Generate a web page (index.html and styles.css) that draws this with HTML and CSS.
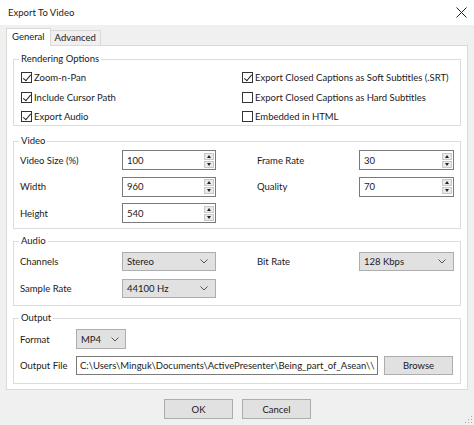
FILE: index.html
```html
<!DOCTYPE html>
<html>
<head>
<meta charset="utf-8">
<link rel="stylesheet" href="styles.css">
</head>
<body>
<div class="window">
  <div class="titlebar">
    <span class="title">Export To Video</span>
    <svg class="close" width="11" height="11" viewBox="0 0 11 11"><path d="M0.5 0.5 L10.5 10.5 M10.5 0.5 L0.5 10.5" stroke="#222" stroke-width="1" fill="none"/></svg>
  </div>
  <div class="client">
    <div class="tabs">
      <div class="tab active">General</div>
      <div class="tab">Advanced</div>
    </div>
    <div class="pane">
      <fieldset class="group render">
        <legend>Rendering Options</legend>
        <div class="checks">
          <label class="chk"><span class="box on"></span>Zoom-n-Pan</label>
          <label class="chk"><span class="box on"></span>Export Closed Captions as Soft Subtitles (.SRT)</label>
          <label class="chk"><span class="box on"></span>Include Cursor Path</label>
          <label class="chk"><span class="box"></span>Export Closed Captions as Hard Subtitles</label>
          <label class="chk"><span class="box on"></span>Export Audio</label>
          <label class="chk"><span class="box"></span>Embedded in HTML</label>
        </div>
      </fieldset>

      <fieldset class="group video">
        <legend>Video</legend>
        <div class="grid vgrid">
          <span class="lbl">Video Size (%)</span>
          <div class="spin"><span class="val">100</span><span class="btns"><i class="up"></i><i class="dn"></i></span></div>
          <span></span>
          <span class="lbl">Frame Rate</span>
          <div class="spin"><span class="val">30</span><span class="btns"><i class="up"></i><i class="dn"></i></span></div>

          <span class="lbl">Width</span>
          <div class="spin"><span class="val">960</span><span class="btns"><i class="up"></i><i class="dn"></i></span></div>
          <span></span>
          <span class="lbl">Quality</span>
          <div class="spin"><span class="val">70</span><span class="btns"><i class="up"></i><i class="dn"></i></span></div>

          <span class="lbl">Height</span>
          <div class="spin"><span class="val">540</span><span class="btns"><i class="up"></i><i class="dn"></i></span></div>
        </div>
      </fieldset>

      <fieldset class="group audio">
        <legend>Audio</legend>
        <div class="grid agrid">
          <span class="lbl">Channels</span>
          <div class="combo"><span class="val">Stereo</span><svg class="chev" width="8" height="5" viewBox="0 0 8 5"><path d="M0.5 0.5 L4 4 L7.5 0.5" stroke="#555" fill="none"/></svg></div>
          <span></span>
          <span class="lbl">Bit Rate</span>
          <div class="combo"><span class="val">128 Kbps</span><svg class="chev" width="8" height="5" viewBox="0 0 8 5"><path d="M0.5 0.5 L4 4 L7.5 0.5" stroke="#555" fill="none"/></svg></div>

          <span class="lbl">Sample Rate</span>
          <div class="combo"><span class="val">44100 Hz</span><svg class="chev" width="8" height="5" viewBox="0 0 8 5"><path d="M0.5 0.5 L4 4 L7.5 0.5" stroke="#555" fill="none"/></svg></div>
        </div>
      </fieldset>

      <fieldset class="group output">
        <legend>Output</legend>
        <div class="orow">
          <span class="lbl olbl">Format</span>
          <div class="combo fmt"><span class="val">MP4</span><svg class="chev" width="8" height="5" viewBox="0 0 8 5"><path d="M0.5 0.5 L4 4 L7.5 0.5" stroke="#555" fill="none"/></svg></div>
        </div>
        <div class="orow row2">
          <span class="lbl olbl">Output File</span>
          <div class="path"><span class="pathtext">C:\Users\Minguk\Documents\ActivePresenter\Being_part_of_Asean\\</span></div>
          <div class="btn browse">Browse</div>
        </div>
      </fieldset>
    </div>
    <div class="footer">
      <div class="btn dlg">OK</div>
      <div class="btn dlg">Cancel</div>
    </div>
  </div>
  <svg class="grip" width="10" height="10" viewBox="0 0 10 10">
    <rect x="8" y="2" width="1" height="1" fill="#aaa"/>
    <rect x="5" y="5" width="1" height="1" fill="#aaa"/>
    <rect x="8" y="5" width="1" height="1" fill="#aaa"/>
    <rect x="2" y="8" width="1" height="1" fill="#aaa"/>
    <rect x="5" y="8" width="1" height="1" fill="#aaa"/>
    <rect x="8" y="8" width="1" height="1" fill="#aaa"/>
  </svg>
</div>
</body>
</html>
```
FILE: styles.css
```css
html, body {
  margin: 0;
  padding: 0;
}
body {
  width: 474px;
  height: 425px;
  overflow: hidden;
  background: #f0f0f0;
  font-family: Lato, "Noto Sans", sans-serif;
  font-size: 9.5px;
  color: #1a1a1a;
}
.window {
  position: relative;
  width: 474px;
  height: 425px;
}
.titlebar {
  height: 25px;
  background: #ffffff;
  display: flex;
  align-items: center;
  justify-content: space-between;
  padding: 0 8px 1px 8px;
  box-sizing: border-box;
}
.title {
  color: #222;
}
.close {
  margin-right: -1px;
}
.client {
  padding: 3px 6px 0 6px;
}
.tabs {
  display: flex;
  align-items: flex-end;
  height: 17px;
  position: relative;
  z-index: 1;
}
.tab {
  height: 14px;
  line-height: 14px;
  padding: 0 4px;
  border: 1px solid #d9d9d9;
  border-bottom: none;
  background: #f0f0f0;
  box-sizing: content-box;
}
.tab.active {
  height: 17px;
  line-height: 15px;
  background: #ffffff;
  padding: 0 5px;
  margin-bottom: -1px;
}
.tab + .tab {
  border-left: none;
}
.pane {
  background: #ffffff;
  border: 1px solid #d9d9d9;
  height: 336px;
  padding: 7px 6px 0 6px;
  box-sizing: content-box;
}
.group {
  margin: 0 0 6px 0;
  border: 1px solid #dcdcdc;
  padding: 0 6px;
  min-width: 0;
}
.group legend {
  padding: 0 2px;
  margin-left: -1px;
  line-height: 12px;
  height: 12px;
}
.render {
  padding-top: 3px;
  padding-bottom: 2px;
  height: 66px;
  box-sizing: content-box;
  margin-bottom: 9px;
}
.checks {
  display: grid;
  grid-template-columns: 221px 1fr;
  grid-auto-rows: 19.5px;
}
.chk {
  display: flex;
  align-items: center;
  white-space: nowrap;
}
.box {
  width: 11px;
  height: 11px;
  border: 1px solid #333;
  box-sizing: border-box;
  margin-right: 2px;
  margin-left: 1px;
  position: relative;
  background: #fff;
  flex: none;
}
.box.on::after {
  content: "";
  position: absolute;
  left: 3px;
  top: 0px;
  width: 3px;
  height: 7px;
  border-right: 1px solid #222;
  border-bottom: 1px solid #222;
  transform: rotate(40deg);
}
.grid {
  display: grid;
  grid-template-columns: 102px 94px 41px 102px 95px;
  align-items: center;
}
.video {
  padding-top: 3px;
  padding-bottom: 5px;
}
.vgrid {
  grid-auto-rows: 20px;
  row-gap: 6.5px;
}
.audio {
  padding-top: 5px;
  padding-bottom: 7px;
}
.agrid {
  grid-auto-rows: 19px;
  row-gap: 8px;
}
.lbl {
  white-space: nowrap;
}
.spin {
  height: 20px;
  border: 1px solid #7a7a7a;
  box-sizing: border-box;
  background: #fff;
  display: flex;
  align-items: center;
  justify-content: space-between;
  padding-left: 4px;
}
.btns {
  display: flex;
  flex-direction: column;
  gap: 1px;
  margin-right: 1px;
}
.btns i {
  display: block;
  width: 10px;
  height: 7px;
  background: #eaeaea;
  border: 1px solid #c8c8c8;
  box-sizing: border-box;
  position: relative;
}
.btns i::after {
  content: "";
  position: absolute;
  left: 2px;
  width: 0;
  height: 0;
  border-left: 2px solid transparent;
  border-right: 2px solid transparent;
}
.btns .up::after {
  top: 1px;
  border-bottom: 3px solid #222;
}
.btns .dn::after {
  top: 1px;
  border-top: 3px solid #222;
}
.combo {
  height: 19px;
  border: 1px solid #adadad;
  background: #e1e1e1;
  box-sizing: border-box;
  display: flex;
  align-items: center;
  justify-content: space-between;
  padding: 0 7px 0 4px;
}
.output {
  padding-top: 5px;
  padding-bottom: 8px;
}
.orow {
  display: flex;
  align-items: center;
  height: 20px;
}
.row2 {
  margin-top: 7px;
  height: 19px;
}
.olbl {
  width: 56px;
}
.fmt {
  width: 50px;
  height: 20px;
  padding-right: 6px;
}
.path {
  width: 302px;
  height: 19px;
  border: 1px solid #7a7a7a;
  box-sizing: border-box;
  background: #fff;
  overflow: hidden;
  white-space: nowrap;
  display: flex;
  align-items: center;
  padding-left: 3px;
}
.btn {
  background: #e1e1e1;
  border: 1px solid #adadad;
  box-sizing: border-box;
  display: flex;
  align-items: center;
  justify-content: center;
}
.browse {
  width: 69px;
  height: 19px;
  margin-left: 6px;
}
.footer {
  display: flex;
  justify-content: center;
  gap: 9px;
  margin-top: 9px;
  padding-left: 1px;
}
.dlg {
  width: 69px;
  height: 20px;
}
.grip {
  position: absolute;
  right: 1px;
  bottom: 1px;
}
```
